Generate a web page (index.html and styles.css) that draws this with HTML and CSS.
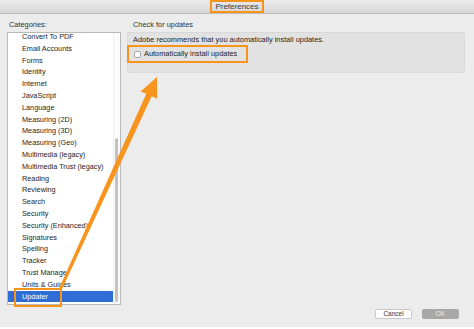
FILE: index.html
```html
<!DOCTYPE html>
<html>
<head>
<meta charset="utf-8">
<link rel="stylesheet" href="styles.css">
</head>
<body>
<div class="window">
  <div class="titlebar"><span class="title">Preferences</span></div>
  <div class="main">
    <div class="left">
      <div class="label">Categories:</div>
      <div class="list">
        <div class="items">
          <div class="item">Convert To PDF</div>
          <div class="item">Email Accounts</div>
          <div class="item">Forms</div>
          <div class="item">Identity</div>
          <div class="item">Internet</div>
          <div class="item">JavaScript</div>
          <div class="item">Language</div>
          <div class="item">Measuring (2D)</div>
          <div class="item">Measuring (3D)</div>
          <div class="item">Measuring (Geo)</div>
          <div class="item">Multimedia (legacy)</div>
          <div class="item">Multimedia Trust (legacy)</div>
          <div class="item">Reading</div>
          <div class="item">Reviewing</div>
          <div class="item">Search</div>
          <div class="item">Security</div>
          <div class="item">Security (Enhanced)</div>
          <div class="item">Signatures</div>
          <div class="item">Spelling</div>
          <div class="item">Tracker</div>
          <div class="item">Trust Manager</div>
          <div class="item">Units &amp; Guides</div>
          <div class="item selected">Updater</div>
        </div>
        <div class="scroll"><div class="thumb"></div></div>
      </div>
    </div>
    <div class="right">
      <div class="label">Check for updates</div>
      <div class="group">
        <div class="note">Adobe recommends that you automatically install updates.</div>
        <div class="check-row">
          <span class="checkbox"></span>
          <span class="check-label">Automatically install updates</span>
        </div>
      </div>
    </div>
  </div>
  <div class="footer">
    <div class="btn cancel">Cancel</div>
    <div class="btn ok">OK</div>
  </div>
</div>
<svg class="annot" width="474" height="329" viewBox="0 0 474 329">
  <rect x="15" y="289" width="46" height="17" fill="none" stroke="#f7941e" stroke-width="2"/>
  <polygon fill="#f7941e" points="58.6,289.4 61.4,290.6 151.7,96.2 157.2,98.7 157,77 140.6,91.5 146.3,93.8"/>
</svg>
</body>
</html>
```

FILE: styles.css
```css
html, body {
  margin: 0;
  padding: 0;
}
body {
  width: 474px;
  height: 329px;
  background: #ffffff;
  font-family: "Liberation Sans", Arial, sans-serif;
  color: #222;
  position: relative;
  overflow: hidden;
}
.window {
  width: 474px;
  height: 327px;
  background: #ececec;
  display: flex;
  flex-direction: column;
}
.titlebar {
  height: 14px;
  box-sizing: border-box;
  background: linear-gradient(#ebebeb, #d6d6d6);
  border-bottom: 1px solid #bdbdbd;
  display: flex;
  justify-content: center;
  align-items: flex-start;
}
.title {
  font-size: 8px;
  line-height: 9px;
  height: 9px;
  padding: 0 3px;
  border: 2px solid #f7941e;
  color: #3a3a3a;
}
.main {
  height: 291px;
  display: flex;
}
.left {
  margin-left: 7px;
  width: 114px;
  padding-top: 6px;
  display: flex;
  flex-direction: column;
}
.label {
  font-size: 7.4px;
  line-height: 10px;
  height: 10px;
  padding-left: 2px;
  color: #333;
}
.list {
  margin-top: 2px;
  height: 273px;
  box-sizing: border-box;
  background: #fff;
  border: 1px solid #b8b8b8;
  display: flex;
  overflow: hidden;
}
.items {
  width: 105px;
  margin-top: -2px;
}
.item {
  font-size: 7.3px;
  line-height: 11.8px;
  height: 11.8px;
  padding-left: 14px;
  color: #1e1e1e;
  white-space: nowrap;
}
.item.selected {
  background: #2f6dd5;
  color: #fff;
}
.scroll {
  width: 7px;
  background: #fafafa;
  border-left: 1px solid #efefef;
  box-sizing: border-box;
}
.thumb {
  margin-top: 105px;
  margin-left: 1px;
  width: 3px;
  height: 164px;
  border-radius: 2px;
  background: #c2c2c2;
}
.right {
  margin-left: 6px;
  width: 338px;
  padding-top: 6px;
}
.right .label {
  padding-left: 6px;
}
.group {
  margin-top: 2px;
  height: 41px;
  box-sizing: border-box;
  background: #e2e2e2;
  border: 1px solid #d9d9d9;
  border-radius: 3px;
  padding-top: 2px;
}
.note {
  font-size: 7.4px;
  line-height: 10px;
  height: 10px;
  padding-left: 5px;
  color: #222;
}
.check-row {
  width: 121px;
  height: 18px;
  box-sizing: border-box;
  margin-left: -1px;
  border: 2px solid #f7941e;
  display: flex;
  align-items: center;
  padding-left: 5px;
}
.checkbox {
  width: 7px;
  height: 7px;
  box-sizing: border-box;
  background: #fff;
  border: 1px solid #a9a9a9;
  border-radius: 2px;
}
.check-label {
  margin-left: 3px;
  font-size: 7.4px;
  line-height: 10px;
  color: #222;
}
.footer {
  flex: 1;
  display: flex;
  justify-content: flex-end;
  align-items: flex-start;
  padding-top: 4px;
  padding-right: 15px;
  gap: 10px;
}
.btn {
  width: 37px;
  height: 10px;
  box-sizing: border-box;
  border-radius: 2px;
  font-size: 6.5px;
  line-height: 10px;
  text-align: center;
}
.cancel {
  background: #fff;
  border: 1px solid #c9c9c9;
  line-height: 8px;
  color: #333;
}
.ok {
  background: #a8a8a8;
  color: #e8e8e8;
}
.annot {
  position: absolute;
  left: 0;
  top: 0;
  pointer-events: none;
}
```
